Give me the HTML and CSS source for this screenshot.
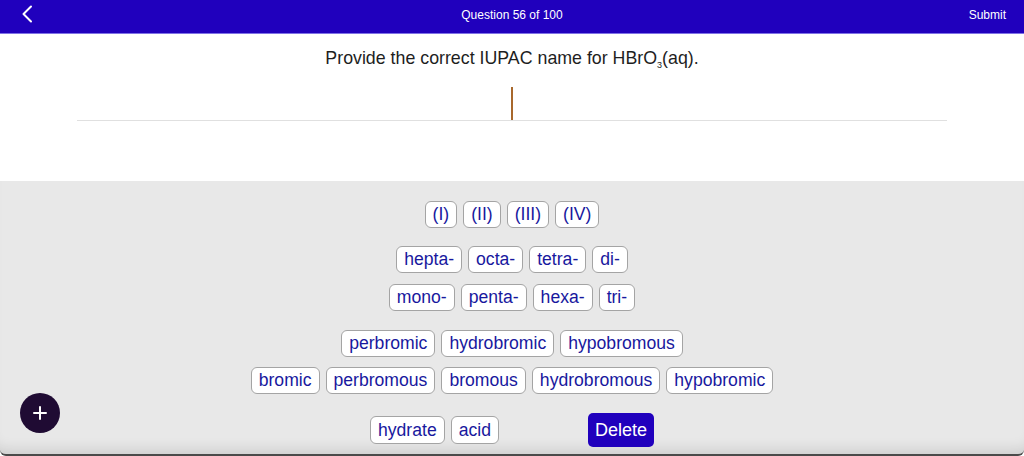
FILE: index.html
```html
<!DOCTYPE html>
<html>
<head>
<meta charset="utf-8">
<link rel="stylesheet" href="styles.css">
</head>
<body>
<div class="app">
  <header class="topbar">
    <span class="back"><svg width="12" height="18" viewBox="0 0 12 18"><path d="M10 1.5 L2.5 9 L10 16.5" fill="none" stroke="#fff" stroke-width="2" stroke-linecap="round" stroke-linejoin="round"/></svg></span>
    <span class="title">Question 56 of 100</span>
    <span class="submit">Submit</span>
  </header>
  <main class="question">
    <p class="prompt">Provide the correct IUPAC name for HBrO<sub>3</sub>(aq).</p>
    <div class="answer"><span class="cursor"></span></div>
  </main>
  <section class="panel">
    <div class="group">
      <div class="row"><span class="key">(I)</span><span class="key">(II)</span><span class="key">(III)</span><span class="key">(IV)</span></div>
    </div>
    <div class="group prefixes">
      <div class="row"><span class="key">hepta-</span><span class="key">octa-</span><span class="key">tetra-</span><span class="key">di-</span></div>
      <div class="row"><span class="key">mono-</span><span class="key">penta-</span><span class="key">hexa-</span><span class="key">tri-</span></div>
    </div>
    <div class="group names">
      <div class="row"><span class="key">perbromic</span><span class="key">hydrobromic</span><span class="key">hypobromous</span></div>
      <div class="row"><span class="key">bromic</span><span class="key">perbromous</span><span class="key">bromous</span><span class="key">hydrobromous</span><span class="key">hypobromic</span></div>
    </div>
    <div class="row bottom"><span class="key">hydrate</span><span class="key">acid</span><span class="delete">Delete</span></div>
    <span class="fab"><svg width="14" height="14" viewBox="0 0 14 14"><path d="M7 1 V13 M1 7 H13" stroke="#fff" stroke-width="2" stroke-linecap="round"/></svg></span>
  </section>
</div>
</body>
</html>
```
FILE: styles.css
```css
* { box-sizing: border-box; }
html, body { margin: 0; padding: 0; }
body {
  width: 1024px;
  height: 456px;
  overflow: hidden;
  font-family: "Liberation Sans", Arial, sans-serif;
  background: #fff;
}
.app { display: flex; flex-direction: column; height: 456px; }
.topbar {
  height: 34px;
  background: #2000bd;
  border-bottom: 1px solid #7f72e6;
  display: flex;
  align-items: center;
  justify-content: space-between;
  padding: 0 18px 3px 21px;
  color: #fff;
  font-size: 12px;
  position: relative;
}
.back { display: flex; width: 12px; height: 18px; margin-top: -3px; }
.title { position: absolute; left: 0; right: 0; text-align: center; top: 8px; }
.submit { position: relative; }
.question { height: 147px; display: flex; flex-direction: column; align-items: center; }
.prompt {
  margin: 13px 0 0;
  font-size: 17.8px;
  color: #1e1e1e;
  line-height: 22px;
}
.prompt sub { font-size: 9px; vertical-align: -4px; line-height: 0; }
.answer {
  margin-top: 18px;
  width: 870px;
  height: 34px;
  border-bottom: 1px solid #e0e0e0;
  display: flex;
  justify-content: center;
}
.cursor { width: 2px; height: 33px; background: #a8682c; }
.panel {
  position: relative;
  flex: 1;
  background: #e8e8e8;
  border-bottom: 2px solid #4a4a4a;
  border-radius: 0 0 6px 6px;
  box-shadow: inset 0 -14px 14px -10px rgba(0,0,0,0.12);
  display: flex;
  flex-direction: column;
  align-items: center;
  padding-top: 20px;
}
.group { display: flex; flex-direction: column; gap: 10px; margin-bottom: 18px; }
.prefixes { gap: 11px; margin-bottom: 19px; }
.names { margin-bottom: 19px; }
.row { display: flex; justify-content: center; gap: 6px; }
.key {
  display: inline-flex;
  align-items: center;
  height: 27px;
  padding: 0 7px;
  background: #fff;
  border: 1px solid #a4a4a4;
  border-radius: 6px;
  color: #18189e;
  font-size: 17.6px;
}
.bottom { align-items: center; height: 34px; }
.bottom .key { height: 28px; }
.delete {
  margin-left: 83px;
  display: inline-flex;
  align-items: center;
  height: 34px;
  padding: 0 7px;
  background: #2000bd;
  color: #fff;
  border-radius: 5px;
  font-size: 18px;
}
.fab {
  position: absolute;
  left: 20px;
  top: 212px;
  width: 40px;
  height: 40px;
  border-radius: 50%;
  background: #1f0b33;
  display: flex;
  align-items: center;
  justify-content: center;
}
```
